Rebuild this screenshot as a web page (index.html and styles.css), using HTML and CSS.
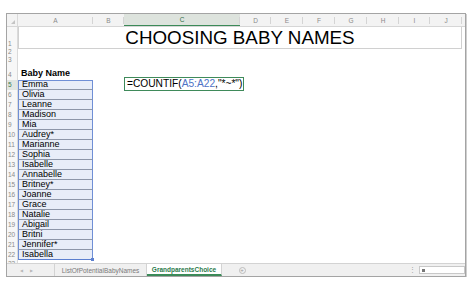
FILE: index.html
```html
<!DOCTYPE html>
<html>
<head>
<meta charset="utf-8">
<link rel="stylesheet" href="styles.css">
</head>
<body>
<div class="page">
  <div class="frame">
    <div class="sheet">
      <div class="row hdr">
        <div class="rh corner"><span class="tri"></span></div>
        <div class="ch ca">A</div>
        <div class="ch cb">B</div>
        <div class="ch cc active">C</div>
        <div class="ch cn">D</div>
        <div class="ch cw">E</div>
        <div class="ch cw">F</div>
        <div class="ch cw">G</div>
        <div class="ch cw">H</div>
        <div class="ch cn">I</div>
        <div class="ch cw">J</div>
      </div>
      <div class="row r1">
        <div class="rh">1</div>
        <div class="title">CHOOSING BABY NAMES</div>
      </div>
      <div class="row r2"><div class="rh">2</div></div>
      <div class="row r3"><div class="rh">3</div></div>
      <div class="row r4">
        <div class="rh">4</div>
        <div class="cell ca bold">Baby Name</div>
      </div>
      <div class="row rn">
        <div class="rh act">5</div>
        <div class="cell ca name first">Emma</div>
        <div class="cell cb"></div>
        <div class="formula">=COUNTIF(<span class="ref">A5:A22</span>,"*~*")</div>
      </div>
      <div class="row rn"><div class="rh">6</div><div class="cell ca name">Olivia</div></div>
      <div class="row rn"><div class="rh">7</div><div class="cell ca name">Leanne</div></div>
      <div class="row rn"><div class="rh">8</div><div class="cell ca name">Madison</div></div>
      <div class="row rn"><div class="rh">9</div><div class="cell ca name">Mia</div></div>
      <div class="row rn"><div class="rh">10</div><div class="cell ca name">Audrey*</div></div>
      <div class="row rn"><div class="rh">11</div><div class="cell ca name">Marianne</div></div>
      <div class="row rn"><div class="rh">12</div><div class="cell ca name">Sophia</div></div>
      <div class="row rn"><div class="rh">13</div><div class="cell ca name">Isabelle</div></div>
      <div class="row rn"><div class="rh">14</div><div class="cell ca name">Annabelle</div></div>
      <div class="row rn"><div class="rh">15</div><div class="cell ca name">Britney*</div></div>
      <div class="row rn"><div class="rh">16</div><div class="cell ca name">Joanne</div></div>
      <div class="row rn"><div class="rh">17</div><div class="cell ca name">Grace</div></div>
      <div class="row rn"><div class="rh">18</div><div class="cell ca name">Natalie</div></div>
      <div class="row rn"><div class="rh">19</div><div class="cell ca name">Abigail</div></div>
      <div class="row rn"><div class="rh">20</div><div class="cell ca name">Britni</div></div>
      <div class="row rn"><div class="rh">21</div><div class="cell ca name">Jennifer*</div></div>
      <div class="row rn"><div class="rh">22</div><div class="cell ca name last">Isabella<span class="handle"></span></div></div>
      <div class="row r23"><div class="rh top">23</div></div>
    </div>
    <div class="tabbar">
      <div class="nav"><span class="arr">&#9664;</span><span class="arr">&#9654;</span></div>
      <div class="tab">ListOfPotentialBabyNames</div>
      <div class="tab on">GrandparentsChoice</div>
      <div class="add"><span class="plus">+</span></div>
      <div class="spacer"></div>
      <div class="dots">&#8942;</div>
      <div class="hscroll"><span class="thumb"></span></div>
    </div>
  </div>
</div>
</body>
</html>
```

FILE: styles.css
```css
* { box-sizing: border-box; }
html, body { margin: 0; padding: 0; background: #ffffff; }
body { font-family: "Liberation Sans", Arial, sans-serif; color: #000; }

.page { padding: 13px 0 0 6px; }

.frame {
  width: 460px;
  height: 264px;
  border: 1px solid #a4a4a4;
  box-shadow: 1px 1px 0 #cfcfcf;
  display: flex;
  flex-direction: column;
  overflow: hidden;
}

.sheet { flex: 1; display: flex; flex-direction: column; overflow: hidden; }

.row { display: flex; flex: none; }
.hdr { height: 13px; background: #f3f3f3; border-bottom: 1px solid #d6d6d6; }
.r1 { height: 22px; }
.r2, .r3 { height: 8px; }
.r4 { height: 15px; }
.rn { height: 10px; }
.r23 { height: 4px; overflow: hidden; }

.rh {
  width: 11px;
  flex: none;
  background: #f7f7f7;
  border-right: 1px solid #dadada;
  font-size: 6.5px;
  color: #8a8a8a;
  display: flex;
  align-items: flex-end;
  padding: 0 0 1px 1px;
  line-height: 8px;
}
.rh.top { align-items: flex-start; padding: 0 0 0 1px; overflow: hidden; }
.rh.act { background: #e2e6e2; color: #3a7a50; }
.corner { position: relative; background: #f3f3f3; }
.tri {
  position: absolute;
  right: 2px;
  bottom: 2px;
  width: 0; height: 0;
  border-left: 4px solid transparent;
  border-bottom: 4px solid #c4c4c4;
}

.ch {
  flex: none;
  position: relative;
  font-size: 6.5px;
  color: #8a8a8a;
  display: flex;
  align-items: center;
  justify-content: center;
}
.ch::after {
  content: "";
  position: absolute;
  right: 0;
  top: 3px;
  height: 7px;
  width: 1px;
  background: #d4d4d4;
}
.ch.active { background: #dde3dd; color: #2f6f45; border-bottom: 1px solid #3b8a58; }

.ca { width: 75px; flex: none; }
.cb { width: 31px; flex: none; }
.cc { width: 116px; flex: none; }
.cn { width: 31px; }
.cw { width: 32px; }

.title {
  width: 444px;
  border: 1px solid #d0d0d0;
  border-top: none;
  font-size: 18.8px;
  line-height: 20px;
  text-align: center;
  display: flex;
  align-items: flex-end;
  justify-content: center;
  padding-bottom: 0;
}

.cell {
  font-size: 9px;
  display: flex;
  align-items: flex-end;
  padding: 0 0 0 3px;
  line-height: 10px;
  white-space: nowrap;
}
.bold { font-weight: bold; padding-bottom: 2px; }

.name {
  background: #e8edf8;
  border-left: 1px solid #6f8fd6;
  border-right: 1px solid #6f8fd6;
  border-bottom: 1px solid #8d96a8;
  position: relative;
}
.name.first { border-top: 1px solid #6f8fd6; }
.name.last { border-bottom: 1px solid #5b7fcf; }
.handle {
  position: absolute;
  right: -2px;
  bottom: -2px;
  width: 3px;
  height: 3px;
  background: #5b7fcf;
}

.formula {
  align-self: flex-start;
  margin-top: -3px;
  height: 14px;
  border: 1px solid #3f8a5a;
  padding: 0 1px 0 2px;
  font-size: 10.2px;
  line-height: 12px;
  white-space: nowrap;
  background: #fff;
}
.ref { color: #4d72c6; }

.tabbar {
  height: 13px;
  flex: none;
  display: flex;
  align-items: stretch;
  background: #f0f0f0;
  border-top: 1px solid #d3d3d3;
  font-size: 6.5px;
  color: #7a7a7a;
}
.nav {
  width: 48px;
  display: flex;
  align-items: center;
  gap: 7px;
  padding-left: 13px;
  border-right: 1px solid #d3d3d3;
}
.arr { font-size: 4px; color: #b8b8b8; }
.tab {
  width: 92px;
  display: flex;
  align-items: center;
  justify-content: center;
  border-right: 1px solid #d3d3d3;
}
.tab.on {
  width: 75px;
  background: #ffffff;
  color: #2b7a4b;
  font-weight: bold;
  border-bottom: 2px solid #3b8a58;
}
.add { width: 40px; display: flex; align-items: center; justify-content: center; }
.plus {
  width: 7px; height: 7px;
  border: 1px solid #bdbdbd;
  border-radius: 50%;
  font-size: 6px;
  line-height: 5px;
  text-align: center;
  color: #9a9a9a;
}
.spacer { flex: 1; }
.dots { width: 8px; display: flex; align-items: center; justify-content: center; font-size: 7px; color: #a0a0a0; }
.hscroll {
  width: 46px;
  background: #ffffff;
  border: 1px solid #c8c8c8;
  margin: 2px 0 2px 3px;
  position: relative;
}
.thumb { position: absolute; left: 2px; top: 2px; width: 3px; height: 3px; background: #777; }
```
